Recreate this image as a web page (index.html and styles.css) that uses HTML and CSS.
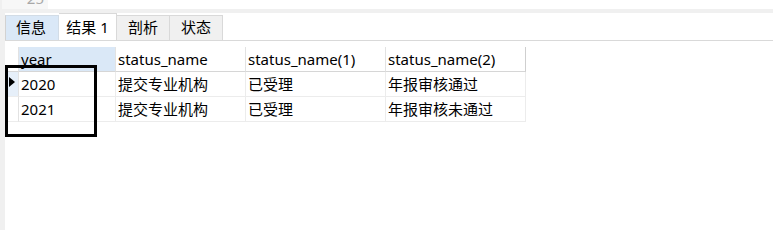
FILE: index.html
```html
<!DOCTYPE html>
<html>
<head>
<meta charset="utf-8">
<link rel="stylesheet" href="styles.css">
</head>
<body>
<div class="editor">
  <div class="gutter"><div class="lineno">25</div></div>
  <div class="code"></div>
</div>
<div class="splitter"></div>
<div class="main">
  <div class="leftstrip"></div>
  <div class="content">
    <div class="tabs">
      <div class="tab tab-info">信息</div>
      <div class="tab tab-active">结果 1</div>
      <div class="tab">剖析</div>
      <div class="tab">状态</div>
    </div>
    <div class="grid">
      <div class="cell ind head"></div>
      <div class="cell head sel">year</div>
      <div class="cell head">status_name</div>
      <div class="cell head">status_name(1)</div>
      <div class="cell head last">status_name(2)</div>

      <div class="cell ind cur"><span class="arrow"></span></div>
      <div class="cell">2020</div>
      <div class="cell">提交专业机构</div>
      <div class="cell">已受理</div>
      <div class="cell last">年报审核通过</div>

      <div class="cell ind"></div>
      <div class="cell">2021</div>
      <div class="cell">提交专业机构</div>
      <div class="cell">已受理</div>
      <div class="cell last">年报审核未通过</div>
    </div>
  </div>
</div>
<div class="mark"></div>
</body>
</html>
```
FILE: styles.css
```css
html, body {
  margin: 0;
  padding: 0;
  background: #ffffff;
}
body {
  height: 230px;
  display: flex;
  flex-direction: column;
  font-family: "Noto Sans", "Noto Sans CJK SC", sans-serif;
  font-size: 15px;
  color: #000;
  overflow: hidden;
}
.editor {
  height: 9px;
  display: flex;
  background: #f0f0f0;
  overflow: hidden;
}
.gutter {
  width: 46px;
  margin-left: 2px;
  background: #f7f7f7;
  overflow: hidden;
  text-align: right;
}
.lineno {
  line-height: 15px;
  margin-top: -9px;
  padding-right: 4px;
  color: #a8a8a8;
}
.code {
  flex: 1;
  background: #ffffff;
}
.splitter {
  height: 4px;
  background: #f0f0f0;
}
.main {
  flex: 1;
  display: flex;
}
.leftstrip {
  width: 5px;
  background: #f0f0f0;
}
.content {
  flex: 1;
}
.tabs {
  height: 27px;
  display: flex;
  align-items: flex-end;
  border-bottom: 1px solid #d9d9d9;
}
.tab {
  box-sizing: border-box;
  height: 25px;
  width: 53px;
  line-height: 23px;
  text-align: center;
  background: #f0f0f0;
  border: 1px solid #d9d9d9;
  border-bottom: none;
  border-left: none;
}
.tab-info {
  width: 54px;
  background: #dae8f7;
  border-color: #d2dce6;
  border-left: 1px solid #d2d2d2;
  padding-right: 2px;
}
.tab-active {
  height: 27px;
  width: 58px;
  line-height: 27px;
  background: #ffffff;
  border-left: none;
}
.grid {
  margin-top: 6px;
  display: grid;
  grid-template-columns: 14px 97px 130px 140px 140px;
  grid-auto-rows: 25px;
}
.cell {
  box-sizing: border-box;
  border-right: 1px solid #ececec;
  border-bottom: 1px solid #ececec;
  padding-left: 2px;
  line-height: 24px;
  white-space: nowrap;
  overflow: hidden;
}
.head {
  border-bottom-color: #d6d6d6;
  border-right-color: #e2e2e2;
}
.head.last {
  border-right-color: #cfcfcf;
}
.sel {
  background: #dae8f7;
}
.ind {
  padding: 0;
  border-right-color: #e2e2e2;
  position: relative;
}
.cur {
  background: #e6eff9;
}
.arrow {
  position: absolute;
  left: 4px;
  top: 5px;
  width: 0;
  height: 0;
  border-left: 6px solid #000;
  border-top: 5px solid transparent;
  border-bottom: 5px solid transparent;
}
.mark {
  position: absolute;
  left: 5px;
  top: 65px;
  width: 92px;
  height: 72px;
  box-sizing: border-box;
  border: 3px solid #000;
}
```
